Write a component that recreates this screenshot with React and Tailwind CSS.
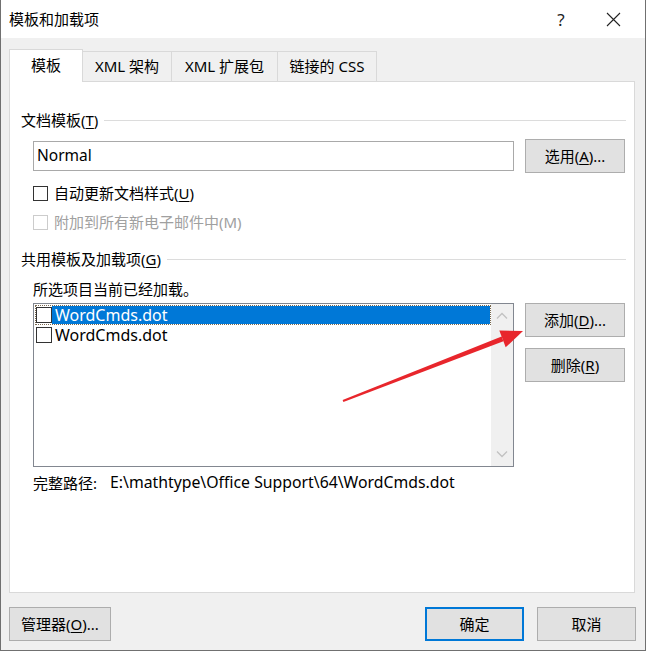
const font = "font-['Noto_Sans','Noto_Sans_CJK_SC',sans-serif]";

function Btn({ children, className = "", primary = false }) {
  return (
    <div
      className={
        "flex items-center justify-center bg-[#e1e1e1] text-[15px] leading-none text-black " +
        (primary ? "border-2 border-[#0078d7] " : "border border-[#adadad] ") +
        className
      }
    >
      {children}
    </div>
  );
}

function GroupHeader({ label, className = "" }) {
  return (
    <div className={"flex items-center h-[20px] pl-[11px] pr-[8px] " + className}>
      <span className="text-[15px] leading-none whitespace-nowrap">{label}</span>
      <div className="flex-1 h-px bg-[#dcdcdc] ml-[6px]" />
    </div>
  );
}

function Check({ disabled = false }) {
  return (
    <div
      className={
        "w-[15px] h-[15px] bg-white border shrink-0 " +
        (disabled ? "border-[#cccccc]" : "border-[#333333]")
      }
    />
  );
}

export default function App() {
  return (
    <div className={"relative w-[646px] h-[652px] bg-white overflow-hidden text-black " + font}>
      <div className="w-[646px] h-[651px] flex flex-col border-x border-b border-[#707070]">
        {/* title bar */}
        <div className="h-[38px] shrink-0 bg-white flex items-center">
          <span className="pl-[8px] text-[15px] leading-none">模板和加载项</span>
          <div className="flex-1" />
          <div className="w-[40px] flex justify-center text-[17px] leading-none text-[#222]">?</div>
          <div className="w-[64px] flex justify-center">
            <svg width="15" height="15" viewBox="0 0 15 15">
              <path d="M1 1L14 14M14 1L1 14" stroke="#222" strokeWidth="1.1" />
            </svg>
          </div>
        </div>

        {/* body */}
        <div className="flex-1 bg-[#f0f0f0] flex flex-col pt-[10px]">
          {/* tabs */}
          <div className="flex items-end pl-[8px] h-[33px] text-[15px] leading-none">
            <div className="relative z-10 w-[74px] h-[33px] -mb-px bg-white border border-b-0 border-[#d9d9d9] flex items-center justify-center pb-[2px]">
              模板
            </div>
            <div className="w-[89px] h-[30px] border-t border-r border-[#d9d9d9] flex items-center justify-center">
              XML 架构
            </div>
            <div className="w-[106px] h-[30px] border-t border-r border-[#d9d9d9] flex items-center justify-center">
              XML 扩展包
            </div>
            <div className="w-[99px] h-[30px] border-t border-r border-[#d9d9d9] flex items-center justify-center">
              链接的 CSS
            </div>
          </div>

          {/* panel */}
          <div className="ml-[8px] w-[626px] h-[512px] bg-white border border-[#d9d9d9] flex flex-col">
            <GroupHeader className="mt-[28px]" label={<>文档模板(<u className="underline-offset-2">T</u>)</>} />

            <div className="flex items-center mt-[9px] ml-[23px]">
              <div className="w-[481px] h-[30px] border border-[#a9a9a9] flex items-center pl-[3px] pb-px text-[15.5px] leading-none">
                Normal
              </div>
              <Btn className="ml-[11px] w-[100px] h-[34px]">
                选用(<u className="underline-offset-2">A</u>)...
              </Btn>
            </div>

            <div className="flex items-center h-[20px] mt-[10px] ml-[23px]">
              <Check />
              <span className="ml-[6px] text-[15px] leading-none">
                自动更新文档样式(<u className="underline-offset-2">U</u>)
              </span>
            </div>
            <div className="flex items-center h-[20px] mt-[9px] ml-[23px]">
              <Check disabled />
              <span className="ml-[6px] text-[15px] leading-none text-[#a0a0a0]">附加到所有新电子邮件中(M)</span>
            </div>

            <GroupHeader className="mt-[17px]" label={<>共用模板及加载项(<u className="underline-offset-2">G</u>)</>} />

            <div className="flex items-center h-[20px] mt-[10px] ml-[23px] text-[15px] leading-none">
              所选项目当前已经加载。
            </div>

            <div className="flex items-start mt-[4px] ml-[23px]">
              <div className="w-[481px] h-[164px] border border-[#828790] flex">
                <div className="flex-1 pt-px text-[16px] leading-none">
                  <div className="ml-px h-[20px] flex items-center border border-dotted border-[#7a6a50]">
                    <div className="w-[16px] h-[16px] bg-white border border-[#333] shrink-0" />
                    <div className="flex-1 h-full bg-[#0078d7] text-white flex items-center pl-[3px] pb-px">
                      WordCmds.dot
                    </div>
                  </div>
                  <div className="ml-[2px] h-[20px] flex items-center">
                    <div className="w-[16px] h-[16px] bg-white border border-[#333] shrink-0" />
                    <span className="pl-[3px] pb-px">WordCmds.dot</span>
                  </div>
                </div>
                <div className="w-[22px] h-full bg-[#f0f0f0] flex flex-col items-center justify-between py-[8px]">
                  <svg width="12" height="8" viewBox="0 0 12 8">
                    <path d="M1 6.5L6 1.5L11 6.5" stroke="#c2c2c2" strokeWidth="1.3" fill="none" />
                  </svg>
                  <svg width="12" height="8" viewBox="0 0 12 8">
                    <path d="M1 1.5L6 6.5L11 1.5" stroke="#c2c2c2" strokeWidth="1.3" fill="none" />
                  </svg>
                </div>
              </div>
              <div className="ml-[11px] flex flex-col gap-[11px]">
                <Btn className="w-[100px] h-[34px]">
                  添加(<u className="underline-offset-2">D</u>)...
                </Btn>
                <Btn className="w-[100px] h-[34px]">
                  删除(<u className="underline-offset-2">R</u>)
                </Btn>
              </div>
            </div>

            <div className="flex items-center h-[20px] mt-[6px] ml-[23px] text-[15px] leading-none whitespace-nowrap">
              <span className="w-[77px]">完整路径:</span>
              <span className="text-[15.8px]">E:\mathtype\Office Support\64\WordCmds.dot</span>
            </div>
          </div>

          {/* footer */}
          <div className="flex items-center mt-[14px] pl-[8px] pr-[9px]">
            <Btn className="w-[102px] h-[34px]">
              管理器(<u className="underline-offset-2">O</u>)...
            </Btn>
            <div className="flex-1" />
            <Btn primary className="w-[99px] h-[34px]">确定</Btn>
            <Btn className="ml-[13px] w-[99px] h-[34px]">取消</Btn>
          </div>
        </div>
      </div>

      {/* red annotation arrow */}
      <svg className="absolute inset-0 pointer-events-none" width="646" height="652" viewBox="0 0 646 652">
        <polygon points="343.4,401.9 342.6,400.1 501.6,336.6 503.4,341.2" fill="#e8262c" />
        <polygon points="523,331 499.3,330.5 505.7,347.3" fill="#e8262c" />
      </svg>
    </div>
  );
}
